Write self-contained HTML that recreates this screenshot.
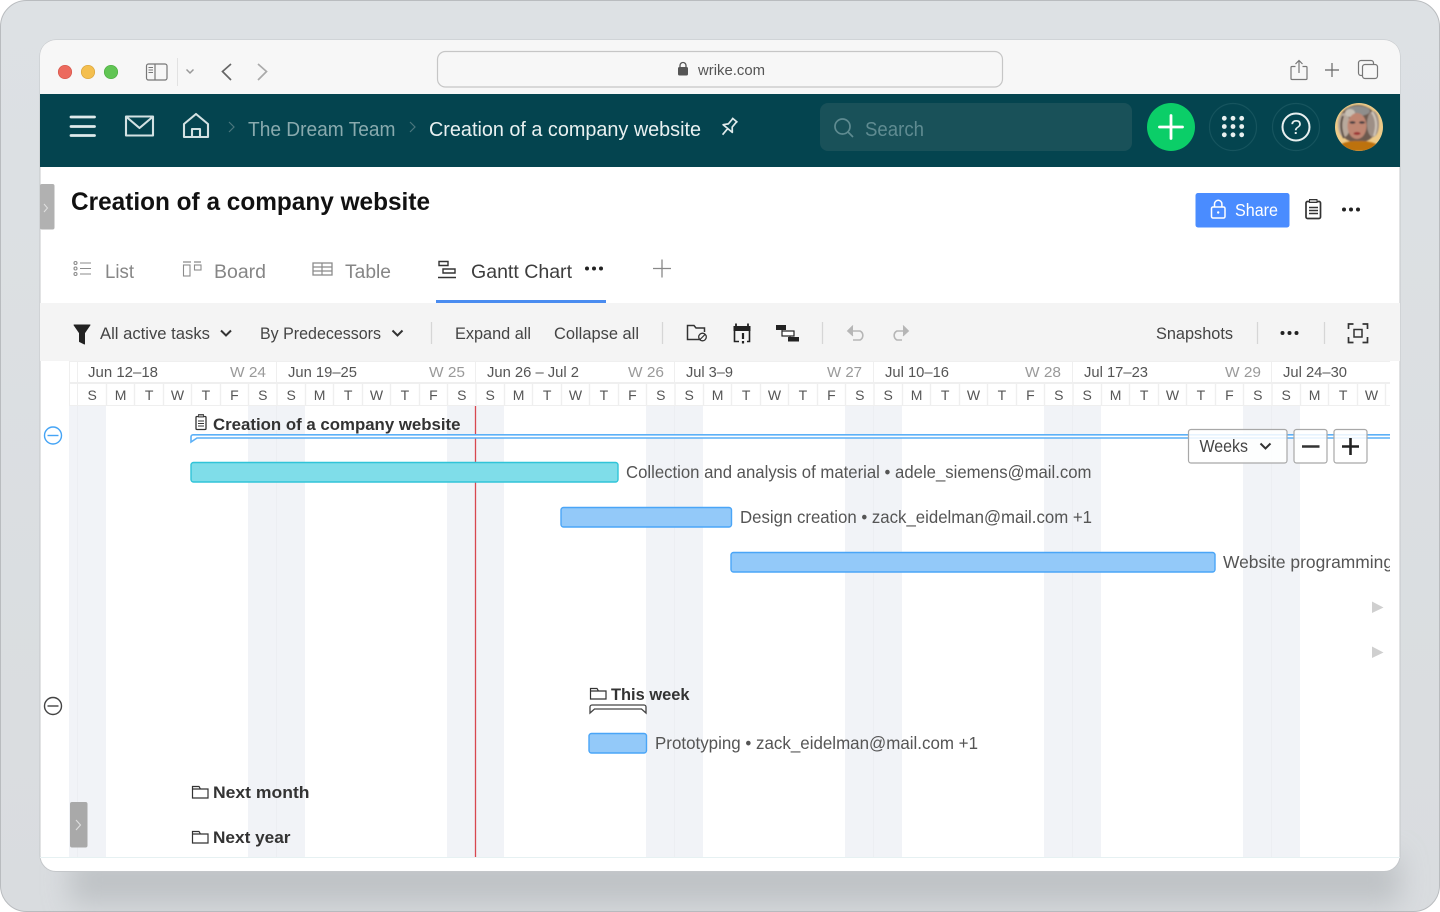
<!DOCTYPE html>
<html lang="en"><head><meta charset="utf-8"><title>Creation of a company website</title>
<style>
html,body{margin:0;padding:0;width:1440px;height:912px;overflow:hidden;background:#fff}
svg{display:block}
text{font-family:"Liberation Sans",sans-serif;white-space:pre}
</style></head><body>
<svg xmlns="http://www.w3.org/2000/svg" width="1440" height="912" viewBox="0 0 1440 912">
<defs>
<linearGradient id="bg" x1="0" y1="0" x2="0" y2="1"><stop offset="0" stop-color="#dde1e4"/><stop offset="1" stop-color="#d9dcdf"/></linearGradient>
<filter id="blur" x="-10%" y="-50%" width="120%" height="200%"><feGaussianBlur stdDeviation="14"/></filter>
<filter id="b2" x="-30%" y="-30%" width="160%" height="160%"><feGaussianBlur stdDeviation=".7"/></filter>
<clipPath id="clipW"><rect x="1200" y="540" width="190" height="40"/></clipPath>
<clipPath id="av"><circle cx="1359" cy="127" r="24"/></clipPath>
<clipPath id="win"><rect x="40" y="40" width="1360" height="831.500" rx="16"/></clipPath>
</defs>

<!-- backdrop -->
<rect x="0.5" y="0.5" width="1439" height="911" rx="26" fill="url(#bg)" stroke="#b9bcbf"/>
<rect x="70" y="855" width="1330" height="50" fill="#b4b8bb" opacity=".7" filter="url(#blur)"/>

<!-- window -->
<rect x="40" y="40" width="1360" height="831.500" rx="16" fill="#fff" stroke="#c4c7ca"/>
<g clip-path="url(#win)">
<rect x="40" y="40" width="1360" height="54" fill="#f7f7f7"/>
<rect x="40" y="94" width="1360" height="73" fill="#04444f"/>
<rect x="40" y="303" width="1360" height="58" fill="#f4f4f4"/>
</g>

<!-- browser chrome -->
<circle cx="65" cy="72" r="6.7" fill="#ec6a5e" stroke="#d5574c" stroke-width=".7"/>
<circle cx="88" cy="72" r="6.7" fill="#f4bf4f" stroke="#d9a53d" stroke-width=".7"/>
<circle cx="111" cy="72" r="6.7" fill="#61c554" stroke="#4fae44" stroke-width=".7"/>
<g fill="none" stroke="#777" stroke-width="1.200">
<rect x="146.500" y="64" width="20.500" height="16" rx="2"/><path d="M155 64V80"/>
<path d="M148.500 67.500H153M148.500 70H153M148.500 72.500H153" stroke-width="1"/>
</g>
<path d="M177.500 58V86" stroke="#e2e2e2"/>
<path d="M186.500 69.500L190 73L193.500 69.500" fill="none" stroke="#999" stroke-width="1.500"/>
<path d="M231 64L222.500 71.500L231 80" fill="none" stroke="#666" stroke-width="1.700"/>
<path d="M258 64L266.500 71.500L258 80" fill="none" stroke="#aaa" stroke-width="1.700"/>
<rect x="437.500" y="51.500" width="565" height="35.500" rx="8" fill="#f7f7f7" stroke="#c6c6c6" stroke-width="1.200"/>
<rect x="678" y="67" width="10" height="8.500" rx="1.500" fill="#555"/><path d="M680 67.500V65.500a3 3 0 0 1 6 0V67.500" fill="none" stroke="#555" stroke-width="1.300"/>
<text x="698" y="75" font-size="14.500" fill="#555" textLength="67" lengthAdjust="spacingAndGlyphs">wrike.com</text>
<g fill="none" stroke="#777" stroke-width="1.200">
<path d="M1295.500 66.500H1292a1 1 0 0 0-1 1V78.500a1 1 0 0 0 1 1H1306a1 1 0 0 0 1-1V67.500a1 1 0 0 0-1-1H1302.500"/>
<path d="M1299 73V60.500M1295.500 64L1299 60.500L1302.500 64"/>
<path d="M1325 70H1339M1332 63V77" stroke="#666"/>
<rect x="1358.500" y="60.500" width="15" height="15" rx="2.500"/>
<rect x="1362.500" y="64.500" width="15" height="14" rx="2.500" fill="#f7f7f7"/>
</g>

<!-- nav -->
<g stroke="#dfeaeb" fill="none" stroke-width="2.800" stroke-linecap="round">
<path d="M71 117H94.500M71 126.500H94.500M71 135.500H94.500"/>
</g>
<g fill="none" stroke="#d3e2e3" stroke-width="2.100" stroke-linejoin="round">
<rect x="126" y="116.500" width="27" height="19"/><path d="M126.500 117L139.500 128L152.500 117"/>
<path d="M184 137V124L196 114L208 124V137ZM192 137V129H200V137"/>
</g>
<path d="M229 122L234 127L229 132" fill="none" stroke="#4a767d" stroke-width="1.200"/>
<path d="M410 122L415 127L410 132" fill="none" stroke="#4a767d" stroke-width="1.200"/>
<text x="248" y="136" font-size="20.500" fill="#89aaae" textLength="147.500" lengthAdjust="spacingAndGlyphs">The Dream Team</text>
<text x="429" y="136" font-size="20.500" fill="#e9f1f1" textLength="272" lengthAdjust="spacingAndGlyphs">Creation of a company website</text>
<g transform="rotate(40 729 127)" fill="none" stroke="#dfeaeb" stroke-width="1.700" stroke-linejoin="round">
<path d="M725.500 118H732.500M726.500 118.500V125L723 129H735L731.500 125V118.500M729 129V137"/>
</g>
<rect x="820" y="103" width="312" height="48" rx="8" fill="#195159"/>
<circle cx="842.500" cy="126.500" r="7.500" fill="none" stroke="#5f8b91" stroke-width="1.700"/><path d="M848 132L853 137" stroke="#5f8b91" stroke-width="1.700"/>
<text x="865" y="136" font-size="20" fill="#5f8b91" textLength="59" lengthAdjust="spacingAndGlyphs">Search</text>
<circle cx="1171" cy="127" r="24" fill="#0bce68"/>
<path d="M1159.500 127H1182.500M1171 115.500V138.500" stroke="#fff" stroke-width="2.800" stroke-linecap="round"/>
<circle cx="1233" cy="127" r="23.500" fill="none" stroke="#16545e" stroke-width="1.200"/>
<g fill="#e8f0f0">
<circle cx="1224.300" cy="118.300" r="2.400"/><circle cx="1233" cy="118.300" r="2.400"/><circle cx="1241.700" cy="118.300" r="2.400"/>
<circle cx="1224.300" cy="126.500" r="2.400"/><circle cx="1233" cy="126.500" r="2.400"/><circle cx="1241.700" cy="126.500" r="2.400"/>
<circle cx="1224.300" cy="134.800" r="2.400"/><circle cx="1233" cy="134.800" r="2.400"/><circle cx="1241.700" cy="134.800" r="2.400"/>
</g>
<circle cx="1296" cy="127" r="23.500" fill="none" stroke="#16545e" stroke-width="1.200"/>
<circle cx="1296" cy="127" r="13.500" fill="none" stroke="#e8f0f0" stroke-width="2"/>
<text x="1296" y="134" font-size="20" fill="#e8f0f0" text-anchor="middle">?</text>
<g clip-path="url(#av)">
<rect x="1335" y="103" width="48" height="48" fill="#eecb88"/>
<g filter="url(#b2)">
<ellipse cx="1358" cy="124" rx="20" ry="19" fill="#6d5a50"/>
<ellipse cx="1344" cy="125" rx="6" ry="12" fill="#b8a99c"/>
<ellipse cx="1373" cy="124" rx="6" ry="13" fill="#9d8f86"/>
<ellipse cx="1358" cy="111" rx="12" ry="5" fill="#8f8e8c"/>
<ellipse cx="1350" cy="113" rx="5" ry="4" fill="#c7bfb4"/>
<path d="M1372 112Q1379 122 1374 136" fill="none" stroke="#d0c6ba" stroke-width="2"/>
<path d="M1343 116Q1339 126 1344 138" fill="none" stroke="#57483f" stroke-width="2"/>
<ellipse cx="1357" cy="126" rx="9.500" ry="13" fill="#bf8672"/>
<ellipse cx="1352.500" cy="122.500" rx="3" ry="1.300" fill="#3f3b3f"/><ellipse cx="1362" cy="122.500" rx="3" ry="1.300" fill="#3f3b3f"/>
<ellipse cx="1357" cy="133.500" rx="3.500" ry="1.500" fill="#9c3636"/>
<path d="M1335 151V147Q1347 140 1358 141Q1370 140 1383 147V151Z" fill="#bd7210"/>
</g>
</g>

<!-- title row -->
<rect x="40" y="184" width="14.500" height="45.500" rx="2" fill="#b1b1b1"/>
<path d="M44 204L47.500 208L44 212" fill="none" stroke="#e0e0e0" stroke-width="1"/>
<text x="71" y="210" font-size="25" font-weight="bold" fill="#111" textLength="359" lengthAdjust="spacingAndGlyphs">Creation of a company website</text>
<rect x="1195.500" y="193" width="94" height="34.500" rx="2.500" fill="#4a8cff"/>
<rect x="1211.500" y="207" width="13.500" height="11" rx="1.500" fill="none" stroke="#fff" stroke-width="1.500"/>
<path d="M1214.500 207V204a3.700 3.700 0 0 1 7.400 0V207" fill="none" stroke="#fff" stroke-width="1.500"/><circle cx="1218.200" cy="212.500" r="1.200" fill="#fff"/>
<text x="1235" y="216" font-size="17.500" fill="#fff" textLength="43" lengthAdjust="spacingAndGlyphs">Share</text>
<g fill="none" stroke="#333" stroke-width="1.700">
<rect x="1306" y="201.500" width="14.500" height="17" rx="1.500"/><rect x="1309.500" y="199.500" width="7.500" height="3" fill="#bbb" stroke-width="1"/>
<path d="M1309 207.500H1318M1309 210.500H1318M1309 213.500H1318" stroke-width="1.400"/>
</g>
<g fill="#222"><circle cx="1344" cy="209.500" r="2"/><circle cx="1351" cy="209.500" r="2"/><circle cx="1358" cy="209.500" r="2"/></g>

<!-- tabs -->
<g fill="none" stroke="#8b8b8b" stroke-width="1.100">
<circle cx="75.500" cy="263" r="1.500"/><circle cx="75.500" cy="268.500" r="1.500"/><circle cx="75.500" cy="274" r="1.500"/>
<path d="M80 263H91M80 268.500H91M80 274H91"/>
<path d="M183 262H191M194 262H201" stroke-width="1.300"/><rect x="183.500" y="265" width="6.500" height="11" /><rect x="194.500" y="265" width="6.500" height="5"/>
<rect x="313" y="263" width="19" height="12" stroke-width="1.300"/><path d="M313 267H332M313 271H332M322 263V275" stroke-width="1.200"/>
</g>
<text x="105" y="278" font-size="19" fill="#868686" textLength="29" lengthAdjust="spacingAndGlyphs">List</text>
<text x="214" y="278" font-size="19" fill="#868686" textLength="52" lengthAdjust="spacingAndGlyphs">Board</text>
<text x="345" y="278" font-size="19" fill="#868686" textLength="46" lengthAdjust="spacingAndGlyphs">Table</text>
<g fill="none" stroke="#333" stroke-width="1.400">
<path d="M439 261.500H448V265.500H439ZM443 269H455V273H443Z"/><path d="M438 277.500H456" stroke-width="1.600"/>
</g>
<text x="471" y="278" font-size="19.500" fill="#3d3d3d" textLength="101" lengthAdjust="spacingAndGlyphs">Gantt Chart</text>
<g fill="#222"><circle cx="587" cy="268.500" r="2"/><circle cx="594" cy="268.500" r="2"/><circle cx="601" cy="268.500" r="2"/></g>
<rect x="436" y="300" width="170" height="3" fill="#4a8cf0"/>
<path d="M653 268.500H671M662 259.500V277.500" stroke="#888" stroke-width="1.300"/>

<!-- toolbar -->
<path d="M74 325H90L84.500 333V344L79.500 341.500V333Z" fill="#222" stroke="#222" stroke-linejoin="round"/>
<text x="100" y="339" font-size="17" fill="#444" textLength="110" lengthAdjust="spacingAndGlyphs">All active tasks</text>
<path d="M221 330.500L226 335.500L231 330.500" fill="none" stroke="#333" stroke-width="2"/>
<text x="260" y="339" font-size="17" fill="#444" textLength="121" lengthAdjust="spacingAndGlyphs">By Predecessors</text>
<path d="M392.500 330.500L397.500 335.500L402.500 330.500" fill="none" stroke="#333" stroke-width="2"/>
<path d="M431.500 322V344M662.500 322V344M822.500 322V344M1257.500 322V344M1324.500 322V344" stroke="#d6d6d6" stroke-width="1.300"/>
<text x="455" y="339" font-size="17" fill="#444" textLength="76" lengthAdjust="spacingAndGlyphs">Expand all</text>
<text x="554" y="339" font-size="17" fill="#444" textLength="85" lengthAdjust="spacingAndGlyphs">Collapse all</text>
<g fill="none" stroke="#333" stroke-width="1.500">
<path d="M701 339.500H687.500V325.500H694L696 328H704.500V332"/>
<circle cx="702.500" cy="337" r="3.800" stroke-width="1.300"/><path d="M700 339.500L705 334.500" stroke-width="1.200"/>
</g>
<rect x="733.500" y="326" width="17" height="5" fill="#222"/>
<path d="M736 323.500V328M748 323.500V328" stroke="#222" stroke-width="1.800"/>
<path d="M734.500 331V341.500H739M749.500 331V341.500H747" fill="none" stroke="#222" stroke-width="1.600"/>
<path d="M743 333V339M743 341V343.500" stroke="#222" stroke-width="2.200"/>
<rect x="776" y="325" width="10" height="5" fill="#222"/>
<rect x="782" y="331" width="12" height="5" fill="#fff" stroke="#222" stroke-width="1.200"/>
<rect x="788" y="337" width="11" height="4.500" fill="#222"/>
<path d="M782 330V334M790 336V338" stroke="#222"/>
<g fill="none" stroke="#b6b6b6" stroke-width="1.600">
<path d="M848 331H860a5 5 0 0 1 0 9H853"/><path d="M853 325.500L847.500 331L853 336" fill="#b6b6b6" stroke-width="1"/>
<path d="M908 331H897a5 5 0 0 0 0 9H902"/><path d="M903 325.500L908.500 331L903 336" fill="#b6b6b6" stroke-width="1"/>
</g>
<text x="1156" y="339" font-size="17" fill="#444" textLength="77" lengthAdjust="spacingAndGlyphs">Snapshots</text>
<g fill="#222"><circle cx="1282.500" cy="333" r="2"/><circle cx="1289.500" cy="333" r="2"/><circle cx="1296.500" cy="333" r="2"/></g>
<g fill="none" stroke="#333" stroke-width="1.700">
<path d="M1348.500 329V324H1353.500M1362.500 324H1367.500V329M1367.500 337V342.500H1362.500M1353.500 342.500H1348.500V337"/>
<rect x="1354" y="329.500" width="8" height="7.500" stroke-width="1.500"/>
</g>

<!-- grid shading -->
<g fill="#f1f3f7">
<rect x="69" y="406" width="37" height="451"/>
<rect x="248" y="406" width="57" height="451"/>
<rect x="447" y="406" width="57" height="451"/>
<rect x="646" y="406" width="57" height="451"/>
<rect x="845" y="406" width="57" height="451"/>
<rect x="1044" y="406" width="57" height="451"/>
<rect x="1243" y="406" width="57" height="451"/>
</g>
<path d="M77.500 406V857M276.500 406V857M475.500 406V857M674.500 406V857M873.500 406V857M1072.500 406V857M1271.500 406V857" stroke="#eceef2"/>
<path d="M40 857.500H1400" stroke="#e6f1f2"/>

<!-- timeline header -->
<rect x="69" y="361" width="1321" height="45" fill="#efefef"/>
<g fill="#fff">
<rect x="70" y="362" width="7" height="20"/><rect x="78" y="362" width="198" height="20"/><rect x="277" y="362" width="198" height="20"/><rect x="476" y="362" width="198" height="20"/><rect x="675" y="362" width="198" height="20"/><rect x="874" y="362" width="198" height="20"/><rect x="1073" y="362" width="198" height="20"/><rect x="1272" y="362" width="118" height="20"/>
<rect x="70" y="384" width="7" height="21"/>
</g>
<path d="M78 394.500H1390" stroke="#fff" stroke-width="21"/>
<path d="M106.500 384V405M134.500 384V405M163.500 384V405M191.500 384V405M220.500 384V405M248.500 384V405M277 384V405M305.500 384V405M333.500 384V405M362.500 384V405M390.500 384V405M419.500 384V405M447.500 384V405M476 384V405M504.500 384V405M532.500 384V405M561.500 384V405M589.500 384V405M618.500 384V405M646.500 384V405M675 384V405M703.500 384V405M731.500 384V405M760.500 384V405M788.500 384V405M817.500 384V405M845.500 384V405M874 384V405M902.500 384V405M930.500 384V405M959.500 384V405M987.500 384V405M1016.500 384V405M1044.500 384V405M1073 384V405M1101.500 384V405M1129.500 384V405M1158.500 384V405M1186.500 384V405M1215.500 384V405M1243.500 384V405M1272 384V405M1300.500 384V405M1328.500 384V405M1357.500 384V405M1385.500 384V405" stroke="#efefef" stroke-width="1.300"/>
<g font-size="15" fill="#555">
<text x="88" y="377" textLength="70" lengthAdjust="spacingAndGlyphs">Jun 12–18</text>
<text x="288" y="377" textLength="69" lengthAdjust="spacingAndGlyphs">Jun 19–25</text>
<text x="487" y="377" textLength="92" lengthAdjust="spacingAndGlyphs">Jun 26 – Jul 2</text>
<text x="686" y="377" textLength="47" lengthAdjust="spacingAndGlyphs">Jul 3–9</text>
<text x="885" y="377" textLength="64" lengthAdjust="spacingAndGlyphs">Jul 10–16</text>
<text x="1084" y="377" textLength="64" lengthAdjust="spacingAndGlyphs">Jul 17–23</text>
<text x="1283" y="377" textLength="64" lengthAdjust="spacingAndGlyphs">Jul 24–30</text>
</g>
<g font-size="15" fill="#9a9a9a">
<text x="230" y="377" textLength="36" lengthAdjust="spacingAndGlyphs">W 24</text>
<text x="429" y="377" textLength="36" lengthAdjust="spacingAndGlyphs">W 25</text>
<text x="628" y="377" textLength="36" lengthAdjust="spacingAndGlyphs">W 26</text>
<text x="827" y="377" textLength="35" lengthAdjust="spacingAndGlyphs">W 27</text>
<text x="1025" y="377" textLength="36" lengthAdjust="spacingAndGlyphs">W 28</text>
<text x="1225" y="377" textLength="36" lengthAdjust="spacingAndGlyphs">W 29</text>
</g>
<g font-size="14" fill="#555" text-anchor="middle">
<text x="92.200" y="400">S</text><text x="120.600" y="400">M</text><text x="149.100" y="400">T</text><text x="177.500" y="400">W</text><text x="205.900" y="400">T</text><text x="234.400" y="400">F</text><text x="262.800" y="400">S</text>
<text x="291.200" y="400">S</text><text x="319.600" y="400">M</text><text x="348.100" y="400">T</text><text x="376.500" y="400">W</text><text x="404.900" y="400">T</text><text x="433.400" y="400">F</text><text x="461.800" y="400">S</text>
<text x="490.200" y="400">S</text><text x="518.600" y="400">M</text><text x="547.100" y="400">T</text><text x="575.500" y="400">W</text><text x="603.900" y="400">T</text><text x="632.400" y="400">F</text><text x="660.800" y="400">S</text>
<text x="689.200" y="400">S</text><text x="717.600" y="400">M</text><text x="746.100" y="400">T</text><text x="774.500" y="400">W</text><text x="802.900" y="400">T</text><text x="831.400" y="400">F</text><text x="859.800" y="400">S</text>
<text x="888.200" y="400">S</text><text x="916.600" y="400">M</text><text x="945.100" y="400">T</text><text x="973.500" y="400">W</text><text x="1001.900" y="400">T</text><text x="1030.400" y="400">F</text><text x="1058.800" y="400">S</text>
<text x="1087.200" y="400">S</text><text x="1115.600" y="400">M</text><text x="1144.100" y="400">T</text><text x="1172.500" y="400">W</text><text x="1200.900" y="400">T</text><text x="1229.400" y="400">F</text><text x="1257.800" y="400">S</text>
<text x="1286.200" y="400">S</text><text x="1314.600" y="400">M</text><text x="1343.100" y="400">T</text><text x="1371.500" y="400">W</text>
</g>

<!-- left collapse buttons -->
<circle cx="53" cy="435.500" r="8.500" fill="none" stroke="#45a4f5" stroke-width="1.400"/><path d="M47.500 435.500H58.500" stroke="#45a4f5" stroke-width="1.400"/>
<circle cx="53" cy="706" r="8.500" fill="none" stroke="#444" stroke-width="1.400"/><path d="M47.500 706H58.500" stroke="#444" stroke-width="1.400"/>

<!-- today line -->
<path d="M475.500 406V857" stroke="#d8474f" stroke-width="1.300"/>

<!-- project summary -->
<g fill="none" stroke="#333" stroke-width="1.300">
<rect x="196" y="416.500" width="10" height="13" rx="1"/><rect x="198.500" y="414.500" width="5" height="2.500" fill="#aaa" stroke-width=".8"/>
<path d="M198 421H204M198 423.500H204M198 426H204" stroke-width="1"/>
</g>
<text x="213" y="430" font-size="17" font-weight="bold" fill="#333" textLength="247.500" lengthAdjust="spacingAndGlyphs">Creation of a company website</text>
<path d="M1390 434.800H193a2 2 0 0 0-2 2V442L197 438H1390" fill="#fff" stroke="#5cb0f7" stroke-width="1.600"/>

<!-- bars -->
<rect x="191" y="462.500" width="427" height="19.500" rx="2.500" fill="#7fdde9" stroke="#30c4d8" stroke-width="1.400"/>
<text x="626" y="478" font-size="17.500" fill="#555" textLength="465.500" lengthAdjust="spacingAndGlyphs">Collection and analysis of material • adele_siemens@mail.com</text>
<rect x="561" y="507.500" width="170.500" height="19.500" rx="2.500" fill="#93c9f9" stroke="#4aa5f7" stroke-width="1.400"/>
<text x="740" y="523" font-size="17.500" fill="#555" textLength="352" lengthAdjust="spacingAndGlyphs">Design creation • zack_eidelman@mail.com +1</text>
<rect x="731" y="552.500" width="484" height="19.500" rx="2.500" fill="#93c9f9" stroke="#4aa5f7" stroke-width="1.400"/>
<g clip-path="url(#clipW)"><text x="1223" y="568" font-size="17.500" fill="#555" textLength="170" lengthAdjust="spacingAndGlyphs">Website programming</text></g>
<path d="M1372 601.500L1383.500 607.500L1372 613ZM1372 646.500L1383.500 652.500L1372 658Z" fill="#cfcfcf"/>

<!-- groups -->
<g fill="none" stroke="#333" stroke-width="1.200">
<path d="M590.500 699V688.500H597L598.500 691H606V699ZM590.500 691H598"/>
<path d="M192.500 798V786.500H199L200.500 789H208V798ZM192.500 789H200"/>
<path d="M192.500 843V831.500H199L200.500 834H208V843ZM192.500 834H200"/>
</g>
<text x="611" y="700" font-size="17" font-weight="bold" fill="#333" textLength="78.500" lengthAdjust="spacingAndGlyphs">This week</text>
<path d="M646 713V707a2 2 0 0 0-2-2H592a2 2 0 0 0-2 2V713L594.500 709H641.500Z" fill="#fff" stroke="#444" stroke-width="1.300"/>
<rect x="589" y="733.500" width="57.500" height="19.500" rx="2.500" fill="#93c9f9" stroke="#4aa5f7" stroke-width="1.400"/>
<text x="655" y="749" font-size="17.500" fill="#555" textLength="323" lengthAdjust="spacingAndGlyphs">Prototyping • zack_eidelman@mail.com +1</text>
<text x="213" y="798" font-size="17" font-weight="bold" fill="#333" textLength="96.500" lengthAdjust="spacingAndGlyphs">Next month</text>
<text x="213" y="843" font-size="17" font-weight="bold" fill="#333" textLength="77.500" lengthAdjust="spacingAndGlyphs">Next year</text>

<!-- left bottom handle -->
<rect x="70" y="802" width="17.500" height="45.500" rx="2" fill="#a9a9a9"/>
<path d="M76 820L80.500 825L76 830" fill="none" stroke="#dedede" stroke-width="1.100"/>

<!-- zoom controls -->
<g fill="#fff" fill-opacity=".85" stroke="#a8a8a8" stroke-width="1.200">
<rect x="1188.500" y="429.500" width="98.500" height="33.500" rx="2.500"/>
<rect x="1294" y="429.500" width="33" height="33.500" rx="2.500"/>
<rect x="1334" y="429.500" width="33" height="33.500" rx="2.500"/>
</g>
<text x="1199.500" y="452" font-size="17.500" fill="#444" textLength="48.500" lengthAdjust="spacingAndGlyphs">Weeks</text>
<path d="M1260.500 443.500L1265.500 448.500L1270.500 443.500" fill="none" stroke="#333" stroke-width="2"/>
<path d="M1302 446.500H1319.500" stroke="#333" stroke-width="2.600"/>
<path d="M1342 446.500H1359M1350.500 438V455" stroke="#222" stroke-width="2.600"/>
</svg>
</body></html>
